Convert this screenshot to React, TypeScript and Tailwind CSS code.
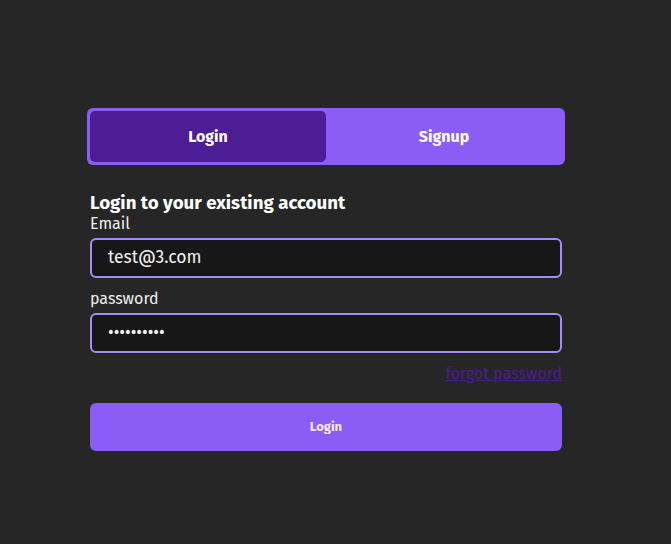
import React from "react";

export default function App() {
  const font = { fontFamily: '"Fira Sans", "Open Sans", "Noto Sans", sans-serif' };
  return (
    <div className="min-h-[544px] w-full bg-[#262626] text-[#f5f5f5]" style={font}>
      <div className="pl-[87px] pt-[108px] w-[565px]">
        <div className="flex rounded-[6px] bg-[#8b5cf6] p-[3px]">
          <button className="flex h-[51px] flex-1 items-center justify-center rounded-[5px] bg-[#4c1d95] text-[16px] font-bold text-white">
            Login
          </button>
          <button className="flex h-[51px] flex-1 items-center justify-center rounded-[5px] text-[16px] font-bold text-white">
            Signup
          </button>
        </div>
        <div className="flex flex-col px-[3px]">
          <h2 className="mt-[26px] text-[18.72px] font-bold leading-[24px] text-white">
            Login to your existing account
          </h2>
          <label className="text-[16px] leading-[18px] text-[#f0f0f0]">Email</label>
          <div className="mt-[5px] flex h-[40px] items-center rounded-[6px] border-2 border-[#a78bfa] bg-[#171717] px-[16px] text-[17.5px] text-[#f0f0f0]">
            test@3.com
          </div>
          <label className="mt-[12px] text-[16px] leading-[18px] text-[#f0f0f0]">password</label>
          <div className="mt-[5px] flex h-[40px] items-center rounded-[6px] border-2 border-[#a78bfa] bg-[#171717] px-[16px] text-[17.5px] text-[#f0f0f0]">
            ••••••••••
          </div>
          <div className="mt-[11px] flex justify-end">
            <a href="#" className="text-[16px] leading-[20px] text-[#4c1d95] underline">
              forgot password
            </a>
          </div>
          <button className="mt-[19px] flex h-[48px] items-center justify-center rounded-[6px] bg-[#8b5cf6] text-[13px] font-bold text-[#fce7f3]">
            Login
          </button>
        </div>
      </div>
    </div>
  );
}
